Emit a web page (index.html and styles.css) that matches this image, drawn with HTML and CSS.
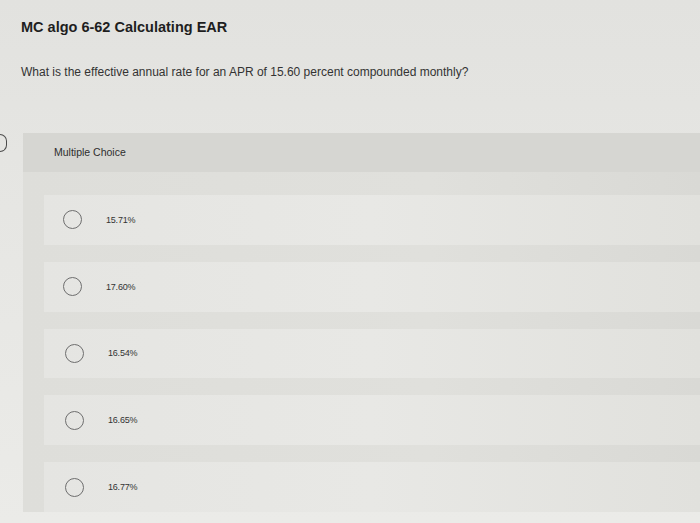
FILE: index.html
```html
<!DOCTYPE html>
<html>
<head>
<meta charset="utf-8">
<link rel="stylesheet" href="styles.css">
</head>
<body>
<div class="page">
  <div class="intro">
    <h1 class="title">MC algo 6-62 Calculating EAR</h1>
    <p class="question">What is the effective annual rate for an APR of 15.60 percent compounded monthly?</p>
  </div>
  <div class="row">
    <div class="edge"></div>
    <div class="panel">
      <div class="panel-head">Multiple Choice</div>
      <div class="panel-body">
        <div class="option"><span class="radio"></span><span class="label">15.71%</span></div>
        <div class="option"><span class="radio"></span><span class="label">17.60%</span></div>
        <div class="option"><span class="radio"></span><span class="label">16.54%</span></div>
        <div class="option"><span class="radio"></span><span class="label">16.65%</span></div>
        <div class="option"><span class="radio"></span><span class="label">16.77%</span></div>
      </div>
    </div>
  </div>
</div>
</body>
</html>
```
FILE: styles.css
```css
html, body {
  margin: 0;
  padding: 0;
}
body {
  width: 700px;
  height: 523px;
  overflow: hidden;
  background: linear-gradient(180deg, #e2e2df 0%, #e7e7e4 50%, #ebebe8 100%);
  font-family: "Liberation Sans", Arial, sans-serif;
  color: #262626;
}
.page {
  display: flex;
  flex-direction: column;
  height: 523px;
}
.intro {
  padding: 18px 0 0 21px;
}
.title {
  margin: 0;
  font-size: 14.5px;
  font-weight: bold;
  line-height: 18px;
  color: #1e1e1e;
}
.question {
  margin: 29px 0 0 0;
  font-size: 12px;
  line-height: 14px;
  color: #333;
}
.row {
  display: flex;
  align-items: flex-start;
  margin-top: 54px;
  gap: 16px;
}
.edge {
  flex: none;
  width: 6px;
  height: 16px;
  margin-top: 1px;
  border: 1.5px solid #4a4a4a;
  border-left: none;
  border-radius: 0 9px 9px 0;
}
.panel {
  flex: 1;
  background: #dcdcd8;
  height: 379px;
}
.panel-head {
  height: 39px;
  background: #d6d6d2;
  padding-left: 31px;
  font-size: 10.5px;
  line-height: 39px;
  color: #2e2e2e;
}
.panel-body {
  display: flex;
  flex-direction: column;
  gap: 17px;
  padding: 23px 0 0 21px;
  background: linear-gradient(90deg, #dededa 0%, #e0e0dc 60%, #d9d9d5 100%);
  height: 317px;
}
.option {
  display: flex;
  align-items: center;
  height: 50px;
  background: linear-gradient(90deg, #e5e5e2 0%, #e8e8e5 50%, #e1e1dd 100%);
  padding-left: 19px;
}
.option:nth-child(n+3) {
  padding-left: 21px;
}
.radio {
  flex: none;
  width: 19px;
  height: 19px;
  border: 1px solid #6e6e6e;
  border-radius: 50%;
  box-sizing: border-box;
}
.label {
  margin-left: 24px;
  font-size: 9px;
  color: #333;
  letter-spacing: -0.2px;
}
```
